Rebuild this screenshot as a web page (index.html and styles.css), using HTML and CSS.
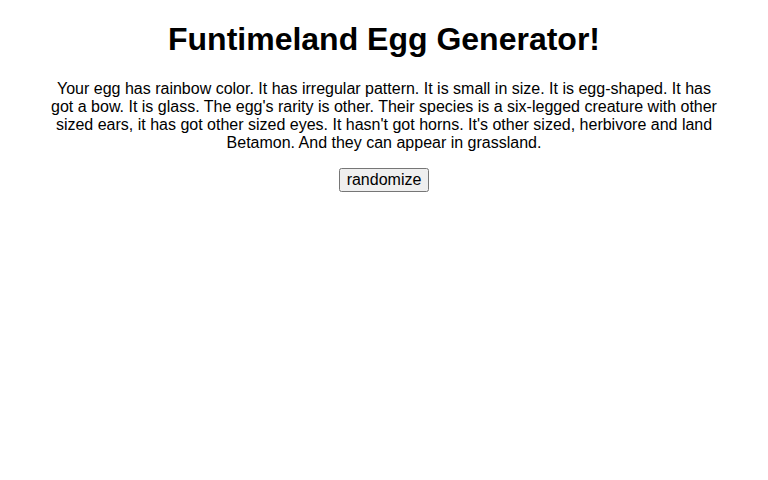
FILE: index.html
```html
<!DOCTYPE html>
<html lang="en">
<head>
   <title>Funtimeland Egg Generator</title>
   <link rel="stylesheet" href="styles.css">
</head>
<body>
   <div id="generator">
      <h1>Funtimeland Egg Generator!</h1>
      <p id="egg">Your egg has rainbow color. It has irregular pattern. It is small in size. It is egg-shaped. It has got a bow. It is glass. The egg's rarity is other. Their species is a six-legged creature with other sized ears, it has got other sized eyes. It hasn't got horns. It's other sized, herbivore and land Betamon. And they can appear in grassland.</p>
      <button class="button" id="randomize">randomize</button>
   </div>
</body>
</html>
```

FILE: styles.css
```css
body {
    margin: 0;
    font-family: "Liberation Sans", Arial, sans-serif;
    background: #fff;
    color: #000;
}
#generator {
    text-align: center;
    padding: 0 48px;
}
h1 {
    font-size: 2em;
}
.button {
    font-family: "Liberation Sans", Arial, sans-serif;
    font-size: 16px;
}
```
